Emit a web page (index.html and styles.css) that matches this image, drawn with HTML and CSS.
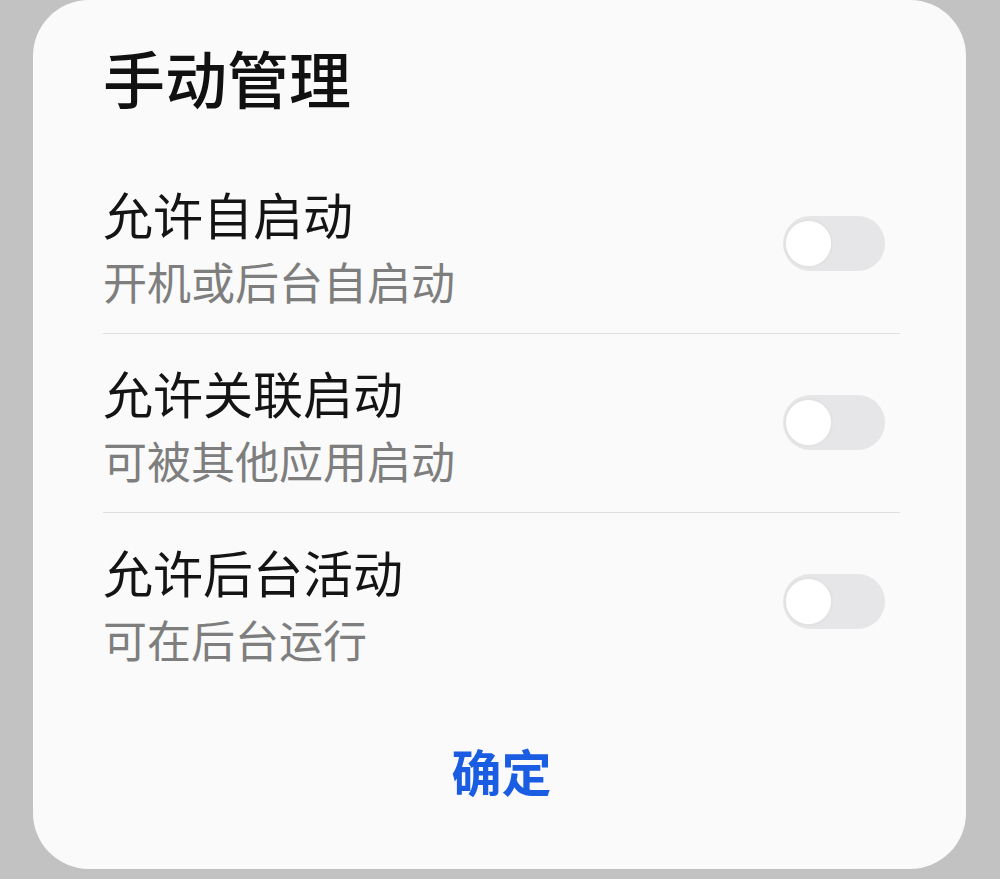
FILE: index.html
```html
<!DOCTYPE html>
<html lang="zh-CN">
<head>
    <meta charset="UTF-8">
    <meta name="viewport" content="width=device-width, initial-scale=1.0">
    <title>手动管理</title>
    <link rel="stylesheet" href="styles.css">
</head>
<body>
    <!-- Dialog -->
    <div class="dialog">
        <h2 class="dialog-title">手动管理</h2>

        <ul class="options">
            <li class="option">
                <div class="option-text">
                    <div class="option-name">允许自启动</div>
                    <div class="option-desc">开机或后台自启动</div>
                </div>
                <span class="switch"><span class="knob"></span></span>
            </li>
            <li class="option">
                <div class="option-text">
                    <div class="option-name">允许关联启动</div>
                    <div class="option-desc">可被其他应用启动</div>
                </div>
                <span class="switch"><span class="knob"></span></span>
            </li>
            <li class="option">
                <div class="option-text">
                    <div class="option-name">允许后台活动</div>
                    <div class="option-desc">可在后台运行</div>
                </div>
                <span class="switch"><span class="knob"></span></span>
            </li>
        </ul>

        <div class="actions">
            <button type="button" class="confirm">确定</button>
        </div>
    </div>
</body>
</html>
```

FILE: styles.css
```css
/* General Styles */
body {
    background-color: #c2c2c2;
    font-family: "Noto Sans CJK SC", "Noto Sans", sans-serif;
    margin: 0;
    padding: 0;
}

.dialog {
    background-color: #fafafa;
    margin: 0 34px 0 33px;
    height: 869px;
    box-sizing: border-box;
    padding: 37px 66px 0 70px;
    border-radius: 56px;
}

.dialog-title {
    font-size: 62px;
    line-height: 80px;
    font-weight: 500;
    color: #111;
    margin: 0 0 38px;
}

.options {
    list-style: none;
    margin: 0;
    padding: 0;
}

.option {
    display: flex;
    align-items: center;
    justify-content: space-between;
    padding: 24px 0 18px;
    border-bottom: 1px solid #e0e0e0;
}

.option:last-child {
    border-bottom: none;
}

.option-name {
    font-size: 50px;
    line-height: 68px;
    font-weight: 400;
    color: #141414;
}

.option-desc {
    font-size: 44px;
    line-height: 68px;
    color: #7e7e7e;
}

.switch {
    width: 102px;
    height: 55px;
    border-radius: 28px;
    background-color: #e6e6e8;
    margin: 0 15px 8px 0;
    display: flex;
    align-items: center;
    padding-left: 1px;
    box-sizing: border-box;
}

.knob {
    width: 49px;
    height: 49px;
    border-radius: 50%;
    background-color: #fff;
    border: 2px solid #e2e2e2;
    box-sizing: border-box;
}

.actions {
    margin-top: 45px;
    text-align: center;
}

.confirm {
    background: none;
    border: none;
    padding: 0;
    font-family: inherit;
    font-size: 50px;
    line-height: 68px;
    font-weight: 700;
    color: #1a5de3;
    cursor: pointer;
}
```
